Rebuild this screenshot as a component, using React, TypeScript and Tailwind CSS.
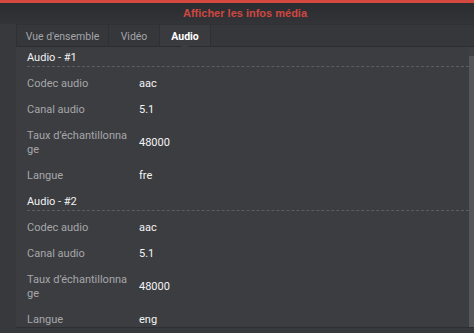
import React from "react";

type Row = { label: string; value: string };

const streams: { title: string; rows: Row[] }[] = [
  {
    title: "Audio - #1",
    rows: [
      { label: "Codec audio", value: "aac" },
      { label: "Canal audio", value: "5.1" },
      { label: "Taux d’échantillonnage", value: "48000" },
      { label: "Langue", value: "fre" },
    ],
  },
  {
    title: "Audio - #2",
    rows: [
      { label: "Codec audio", value: "aac" },
      { label: "Canal audio", value: "5.1" },
      { label: "Taux d’échantillonnage", value: "48000" },
      { label: "Langue", value: "eng" },
    ],
  },
];

const tabs = [
  { name: "Vue d'ensemble", cls: "w-[93px] border-l" },
  { name: "Vidéo", cls: "w-[51px]" },
  { name: "Audio", cls: "w-[51px]" },
];

export default function App() {
  return (
    <div
      className="w-[474px] h-[333px] overflow-hidden bg-[#38393d] flex flex-col"
      style={{ fontFamily: "Roboto, 'Liberation Sans', sans-serif" }}
    >
      <div className="h-[3px] bg-[#d3483f] shrink-0" />
      <div className="h-[21px] shrink-0 pl-[16px] bg-gradient-to-b from-[#2b2c30] to-[#333438] flex items-center justify-center">
        <span
          className="text-[11px] font-bold text-[#cf4741] leading-none"
          style={{ fontFamily: "'Liberation Sans', Arial, sans-serif" }}
        >
          Afficher les infos média
        </span>
      </div>

      <div className="ml-[16px] h-[23px] shrink-0 flex bg-[#36373b] border-t border-[#303135] border-b border-b-[#2c2d31]">
        {tabs.map((t, i) => {
          const active = i === 2;
          return (
            <div
              key={t.name}
              className={
                "relative flex items-center justify-center pt-[2px] text-[10.5px] border-r border-[#2f3034] " +
                t.cls +
                (active ? " text-white font-bold bg-[#3a3b3f]" : " text-[#a4a5a8]")
              }
            >
              {t.name}
              {active && (
                <span className="absolute left-1/2 -bottom-[1px] -ml-[4px] w-0 h-0 border-l-[4px] border-r-[4px] border-b-[4px] border-l-transparent border-r-transparent border-b-[#3c3d41]" />
              )}
            </div>
          );
        })}
      </div>

      <div className="ml-[16px] h-[281px] shrink-0 flex bg-[#3c3d41] border-b border-[#2e2f33]">
        <div className="flex-1 pl-[11px]">
          {streams.map((s, si) => (
            <div key={s.title} className={si > 0 ? "mt-[3px]" : ""}>
              <div className="h-[20px] pt-[3px] flex items-center text-[11px] text-[#f2f2f2] border-b border-dashed border-[#5c5d61]">
                {s.title}
              </div>
              <div className="pt-[3px]">
                {s.rows.map((r) => (
                  <div
                    key={r.label}
                    className={"flex items-center pt-[1px] " + (r.label.length > 15 ? "h-[40px]" : "h-[26px]")}
                  >
                    <div className="w-[104px] text-[11px] leading-[14px] text-[#a6a7aa] break-all">
                      {r.label}
                    </div>
                    <div className="ml-[8px] text-[11px] leading-[14px] text-[#f4f4f4]">
                      {r.value}
                    </div>
                  </div>
                ))}
              </div>
            </div>
          ))}
        </div>
        <div className="w-[5px] pt-[9px] bg-[#3f4044]">
          <div className="h-full bg-[#55565a]" />
        </div>
      </div>
    </div>
  );
}
